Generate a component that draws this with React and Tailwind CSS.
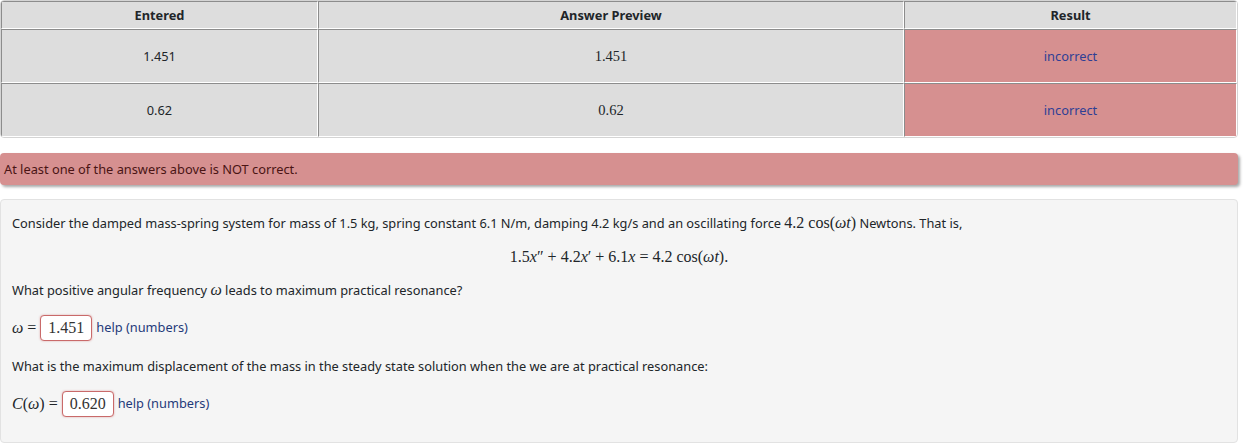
import React from "react";

const rows = [
  { entered: "1.451", preview: "1.451" },
  { entered: "0.62", preview: "0.62" },
];

const cell = "flex items-center justify-center border-t border-l border-t-[#8c8c8c] border-l-[#8c8c8c] border-b border-r border-b-white border-r-white";
const math = "text-[16px] [font-family:'Liberation_Serif',serif]";

function V({ children }) {
  return <span className="italic">{children}</span>;
}

function Op({ children }) {
  return <span className="mx-[4px]">{children}</span>;
}

function AnswerBox({ value }) {
  return (
    <span className="inline-flex items-center h-[26px] px-[7px] bg-white border border-[#c96a6a] rounded-[4px] shadow-[0_0_2px_rgba(200,80,80,0.5)] text-[16px] text-[#333] [font-family:'Liberation_Serif',serif]">
      {value}
    </span>
  );
}

export default function App() {
  return (
    <div className="w-[1248px] h-[448px] bg-white text-[12.8px] text-[#212529] [font-family:'Noto_Sans',sans-serif] pr-[10px]">
      <div className="border border-[#d4d4d4] rounded-[4px] overflow-hidden grid grid-cols-[317px_586px_1fr]">
        <div className={`${cell} h-[28px] pt-[2px] bg-[#dddddd] font-bold`}>Entered</div>
        <div className={`${cell} h-[28px] pt-[2px] bg-[#dddddd] font-bold`}>Answer Preview</div>
        <div className={`${cell} h-[28px] pt-[2px] bg-[#dddddd] font-bold`}>Result</div>
        {rows.map((r) => (
          <React.Fragment key={r.entered}>
            <div className={`${cell} h-[54px] pt-[2px] bg-[#dddddd]`}>{r.entered}</div>
            <div className={`${cell} h-[54px] pt-[2px] bg-[#dddddd] text-[14.5px] [font-family:'Liberation_Serif',serif]`}>{r.preview}</div>
            <div className={`${cell} h-[54px] pt-[2px] bg-[#d69090] text-[#2f3f95]`}>incorrect</div>
          </React.Fragment>
        ))}
      </div>

      <div className="mt-[15px] h-[32px] flex items-center px-[4px] pt-[2px] bg-[#d69090] text-[#4a1414] rounded-[4px] shadow-[2px_2px_3px_rgba(0,0,0,0.35)]">
        At least one of the answers above is NOT correct.
      </div>

      <div className="mt-[14px] h-[244px] bg-[#f5f5f5] border border-[#e2e2e2] rounded-[4px] px-[11px] pt-[14px]">
        <p className="leading-[18px]">
          Consider the damped mass-spring system for mass of 1.5 kg, spring constant 6.1 N/m, damping 4.2 kg/s and an oscillating force{" "}
          <span className={math}>
            4.2 cos(<V>ωt</V>)
          </span>{" "}
          Newtons. That is,
        </p>
        <p className={`mt-[15px] text-center leading-[20px] ${math}`}>
          1.5<V>x</V>″<Op>+</Op>4.2<V>x</V>′<Op>+</Op>6.1<V>x</V><Op>=</Op>4.2 cos(<V>ωt</V>).
        </p>
        <p className="mt-[14px] leading-[18px]">
          What positive angular frequency <span className={math}><V>ω</V></span> leads to maximum practical resonance?
        </p>
        <div className="mt-[16px] flex items-center">
          <span className={math}><V>ω</V><Op>=</Op></span>
          <AnswerBox value="1.451" />
          <span className="ml-[4px] text-[#1f3a7a]">help (numbers)</span>
        </div>
        <p className="mt-[16px] leading-[18px]">
          What is the maximum displacement of the mass in the steady state solution when the we are at practical resonance:
        </p>
        <div className="mt-[16px] flex items-center">
          <span className={math}><V>C</V>(<V>ω</V>)<Op>=</Op></span>
          <AnswerBox value="0.620" />
          <span className="ml-[4px] text-[#1f3a7a]">help (numbers)</span>
        </div>
      </div>
    </div>
  );
}
